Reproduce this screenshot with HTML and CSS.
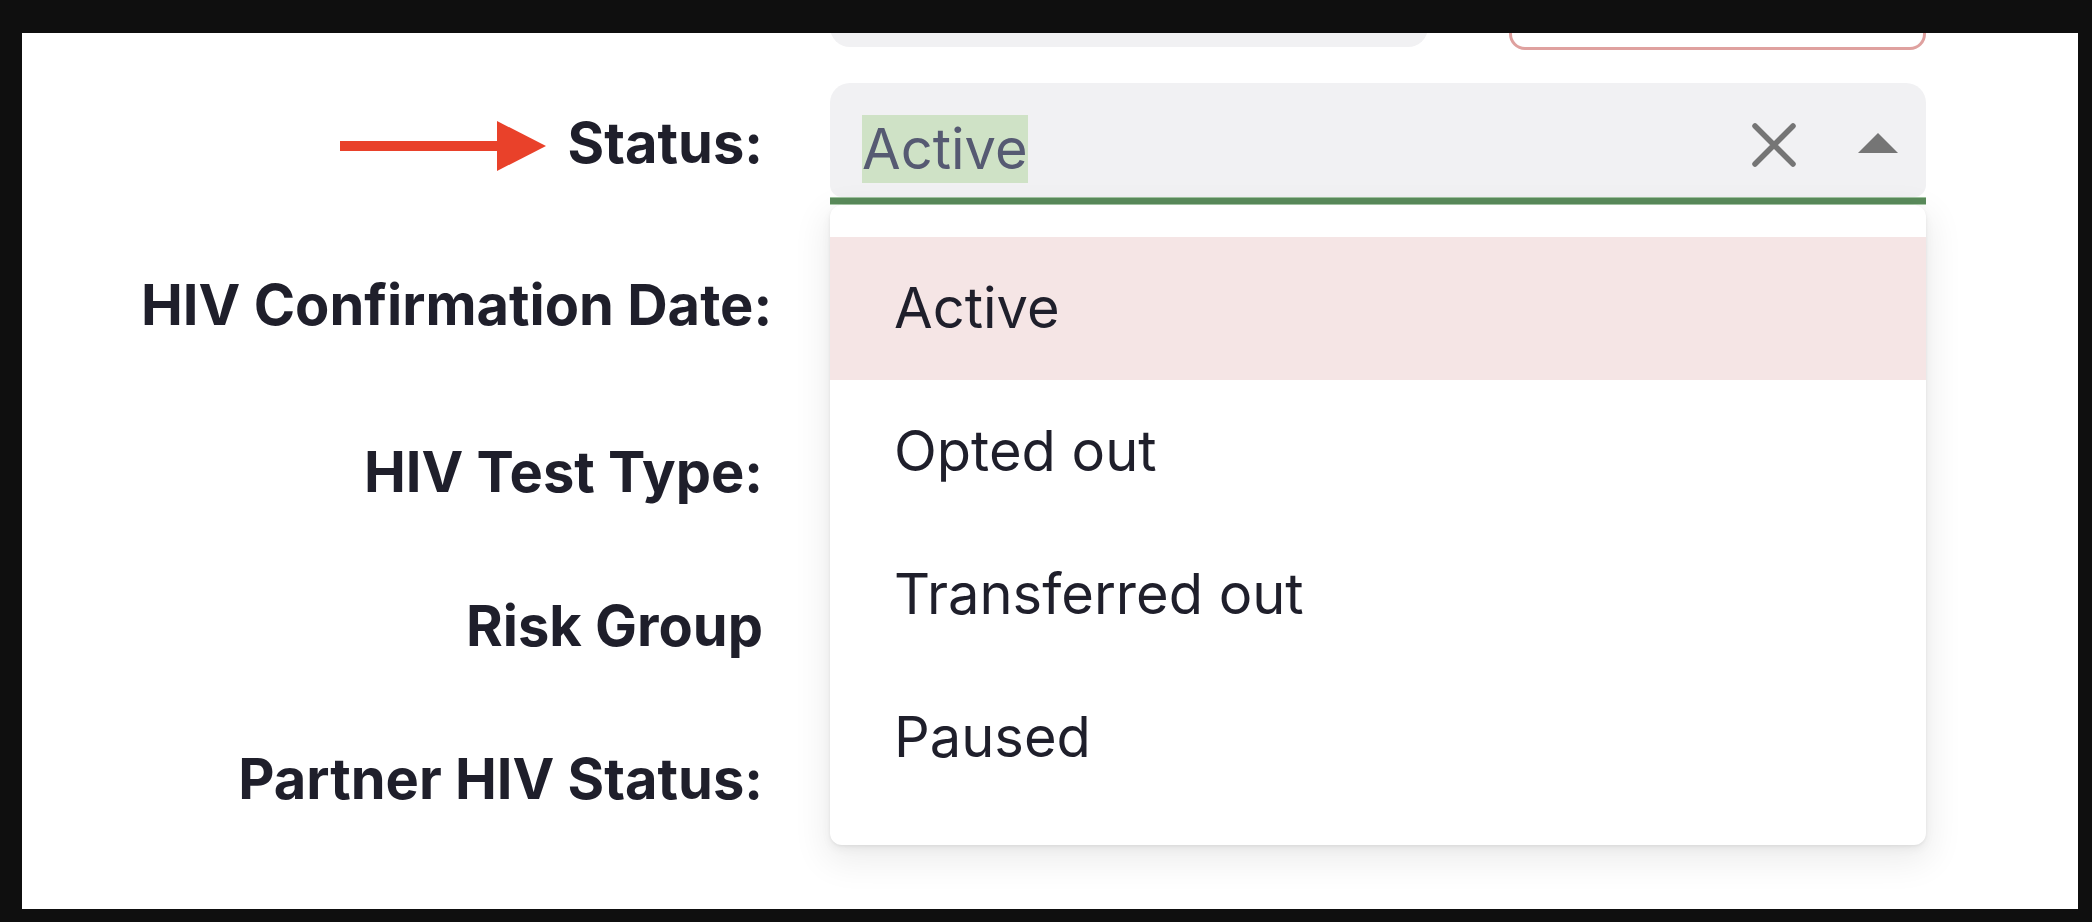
FILE: index.html
```html
<!DOCTYPE html>
<html lang="en">
<head>
<meta charset="utf-8">
<title>Status</title>
<link rel="stylesheet" href="styles.css">
</head>
<body>
<div class="frame">
  <div class="panel">
    <svg class="annot-arrow" width="206" height="50" viewBox="0 0 206 50" aria-hidden="true">
      <rect x="0" y="20" width="160" height="10" fill="#e9412a"/>
      <polygon points="157,0 206,25 157,50" fill="#e9412a"/>
    </svg>

    <div class="row row-top">
      <div class="label"></div>
      <div class="field-pair">
        <div class="stub-input"></div>
        <div class="stub-button"></div>
      </div>
    </div>

    <div class="row row-status">
      <div class="label label-status">Status:</div>
      <div class="select-wrap">
        <div class="select">
          <span class="select-value">Active</span>
          <span class="spacer"></span>
          <svg class="icon-clear" width="46" height="46" viewBox="0 0 46 46" aria-hidden="true">
            <path d="M4 4 L42 42 M42 4 L4 42" stroke="#757575" stroke-width="5.5" stroke-linecap="round" fill="none"/>
          </svg>
          <svg class="icon-caret" width="40" height="20" viewBox="0 0 40 20" aria-hidden="true">
            <polygon points="0,20 20,0 40,20" fill="#757575"/>
          </svg>
        </div>
        <div class="underline"></div>
        <ul class="menu">
          <li class="menu-item is-active">Active</li>
          <li class="menu-item">Opted out</li>
          <li class="menu-item">Transferred out</li>
          <li class="menu-item">Paused</li>
        </ul>
      </div>
    </div>

    <div class="row row-date"><div class="label">HIV Confirmation Date:</div></div>
    <div class="row row-test"><div class="label">HIV Test Type:</div></div>
    <div class="row row-risk"><div class="label">Risk Group</div></div>
    <div class="row row-partner"><div class="label">Partner HIV Status:</div></div>
  </div>
</div>
</body>
</html>
```

FILE: styles.css
```css
* { box-sizing: border-box; }

html, body {
  margin: 0;
  padding: 0;
  background: #0f0f0f;
}

body {
  font-family: Inter, "Noto Sans", "Liberation Sans", sans-serif;
  color: #1f1f2b;
}

.frame {
  width: 2092px;
  height: 922px;
  padding: 33px 14px 13px 22px;
}

.panel {
  position: relative;
  width: 2056px;
  height: 876px;
  background: #ffffff;
  overflow: hidden;
  padding-left: 119px;
}

.annot-arrow {
  position: absolute;
  left: 318px;
  top: 88px;
}

.row {
  display: flex;
  align-items: flex-start;
  gap: 67px;
}

.label {
  width: 622px;
  flex-shrink: 0;
  text-align: right;
  white-space: nowrap;
  font-weight: 700;
  font-size: 56px;
  line-height: 68px;
  color: #1f1f2b;
}

/* partially visible row at the top */
.row-top {
  margin-top: -46px;
  height: 60px;
}

.field-pair {
  display: flex;
  gap: 81px;
  width: 1096px;
}

.stub-input {
  width: 598px;
  height: 60px;
  background: #f1f1f3;
  border-radius: 20px;
}

.stub-button {
  width: 417px;
  height: 63px;
  background: #ffffff;
  border: 3px solid #dfa19f;
  border-radius: 16px;
}

/* status row */
.row-status {
  margin-top: 36px;
  height: 188px;
}

.label-status {
  margin-top: 26px;
}

.select-wrap {
  position: relative;
  width: 1096px;
}

.select {
  display: flex;
  align-items: flex-start;
  height: 114px;
  background: #f1f1f3;
  border-radius: 20px 20px 12px 12px;
}

.select-value {
  margin-top: 32px;
  margin-left: 32px;
  font-size: 56px;
  line-height: 68px;
  color: #565a72;
  background: #cfe2c6;
}

.spacer { flex: 1; }

.icon-clear {
  margin-top: 39px;
  flex-shrink: 0;
}

.icon-caret {
  margin-top: 50px;
  margin-left: 61px;
  margin-right: 28px;
  flex-shrink: 0;
}

.underline {
  height: 8px;
  background: #5a8b5b;
  border-top: 1px solid #9fc39f;
  border-bottom: 1px solid #a9c9a9;
}

.menu {
  position: absolute;
  top: 122px;
  left: 0;
  width: 1096px;
  height: 640px;
  margin: 0;
  padding: 32px 0 0;
  list-style: none;
  background: #ffffff;
  border-radius: 12px;
  box-shadow: 0 12px 34px 6px rgba(0, 0, 0, 0.07),
              0 4px 10px rgba(0, 0, 0, 0.05),
              0 1px 3px rgba(0, 0, 0, 0.06);
  z-index: 2;
}

.menu-item {
  height: 143px;
  padding-left: 64px;
  font-size: 56px;
  line-height: 143px;
  color: #1f1f2b;
}

.menu-item.is-active {
  background: #f5e5e5;
}

/* remaining label rows */
.row-date { height: 167px; }
.row-test { height: 154px; }
.row-risk { height: 153px; }
.row-partner { height: 120px; }
```
